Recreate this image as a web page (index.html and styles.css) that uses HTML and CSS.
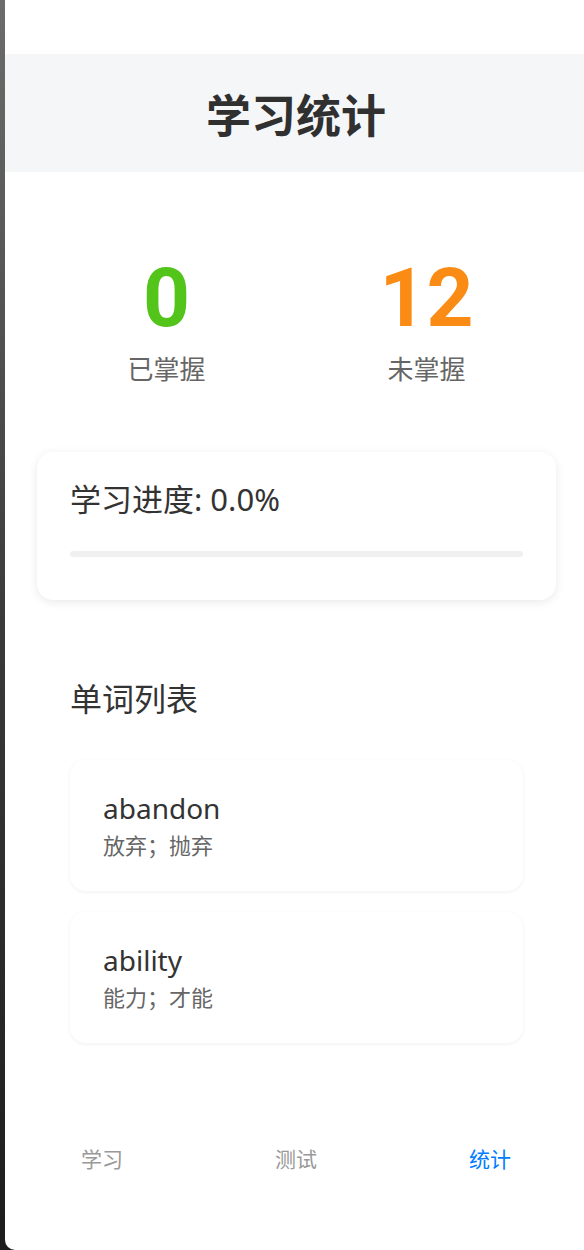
FILE: index.html
```html
<!DOCTYPE html>
<html lang="zh-CN">
<head>
<meta charset="utf-8">
<title>学习统计</title>
<link rel="stylesheet" href="styles.css">
</head>
<body>
<div class="frame">
  <main class="app">
    <div class="status-space"></div>
    <header class="header">
      <h1 class="title">学习统计</h1>
    </header>

    <section class="stats">
      <div class="stat">
        <div class="stat-num green">0</div>
        <div class="stat-label">已掌握</div>
      </div>
      <div class="stat">
        <div class="stat-num orange">12</div>
        <div class="stat-label">未掌握</div>
      </div>
    </section>

    <section class="progress-card">
      <div class="progress-text">学习进度: 0.0%</div>
      <div class="progress-track"><div class="progress-fill" style="width:0%"></div></div>
    </section>

    <h2 class="section-title">单词列表</h2>

    <div class="word-list">
      <div class="word-card">
        <div class="word">abandon</div>
        <div class="meaning">放弃；抛弃</div>
      </div>
      <div class="word-card">
        <div class="word">ability</div>
        <div class="meaning">能力；才能</div>
      </div>
    </div>

    <div class="spacer"></div>

    <nav class="tabbar">
      <div class="tab">学习</div>
      <div class="tab">测试</div>
      <div class="tab active">统计</div>
    </nav>
  </main>
</div>
</body>
</html>
```

FILE: styles.css
```css
* { box-sizing: border-box; }

html, body {
  margin: 0;
  padding: 0;
  height: 1250px;
}

body {
  font-family: "Noto Sans", "Noto Sans CJK SC", sans-serif;
  color: #333333;
}

.frame {
  height: 1250px;
  display: flex;
  background: linear-gradient(to bottom, #6c6c6c 0%, #3a3a3a 50%, #1c1c1c 100%);
  padding-left: 5px;
}

.app {
  flex: 1;
  height: 1250px;
  background: #ffffff;
  border-bottom-left-radius: 10px;
  display: flex;
  flex-direction: column;
  overflow: hidden;
}

.status-space {
  height: 54px;
  flex: none;
}

.header {
  height: 118px;
  flex: none;
  background: #f5f6f8;
  display: flex;
  align-items: center;
  justify-content: center;
}

.title {
  margin: 0;
  font-family: "Noto Sans CJK SC", sans-serif;
  font-size: 45px;
  font-weight: 700;
  color: #303030;
  line-height: 1;
  padding-left: 3px;
}

.stats {
  display: grid;
  grid-template-columns: 260px 260px;
  justify-content: center;
  padding-top: 85px;
  padding-left: 4px;
}

.stat {
  display: flex;
  flex-direction: column;
  align-items: center;
}

.stat-num {
  font-family: Roboto, sans-serif;
  font-weight: 700;
  font-size: 82px;
  line-height: 82px;
}

.green { color: #52c41a; }
.orange { color: #fa8c16; }

.stat-label {
  margin-top: 13px;
  font-family: "Noto Sans CJK SC", sans-serif;
  font-size: 26px;
  line-height: 31px;
  color: #666666;
}

.progress-card {
  margin: 69px 28px 0 32px;
  background: #ffffff;
  border-radius: 16px;
  box-shadow: 0 2px 10px rgba(0, 0, 0, 0.09);
  padding: 27px 33px 43px 33px;
}

.progress-text {
  font-size: 31px;
  line-height: 40px;
  color: #333333;
}

.progress-text .num {
  font-size: 32px;
}

.progress-track {
  margin-top: 32px;
  height: 6px;
  border-radius: 3px;
  background: #f0f0f0;
  overflow: hidden;
}

.progress-fill {
  height: 100%;
  background: #007dff;
}

.section-title {
  margin: 77px 0 0 65px;
  font-family: "Noto Sans CJK SC", sans-serif;
  font-size: 32px;
  font-weight: 400;
  line-height: 40px;
  color: #333333;
}

.word-list {
  margin: 43px 61px 0 65px;
  display: flex;
  flex-direction: column;
  gap: 21px;
}

.word-card {
  height: 131px;
  background: #ffffff;
  border-radius: 16px;
  box-shadow: 0 1px 4px rgba(0, 0, 0, 0.06);
  padding: 30px 33px 0 33px;
}

.word {
  font-size: 28px;
  line-height: 36px;
  color: #333333;
}

.meaning {
  margin-top: 3px;
  font-family: "Noto Sans CJK SC", sans-serif;
  font-size: 22px;
  line-height: 30px;
  color: #666666;
}

.spacer {
  flex: 1;
}

.tabbar {
  flex: none;
  height: 100px;
  margin-bottom: 42px;
  display: grid;
  grid-template-columns: 194px 194px 194px;
  align-items: center;
}

.tab {
  text-align: center;
  font-family: "Noto Sans CJK SC", sans-serif;
  font-size: 21px;
  line-height: 28px;
  color: #999999;
}

.tab.active {
  color: #007dff;
}
```
